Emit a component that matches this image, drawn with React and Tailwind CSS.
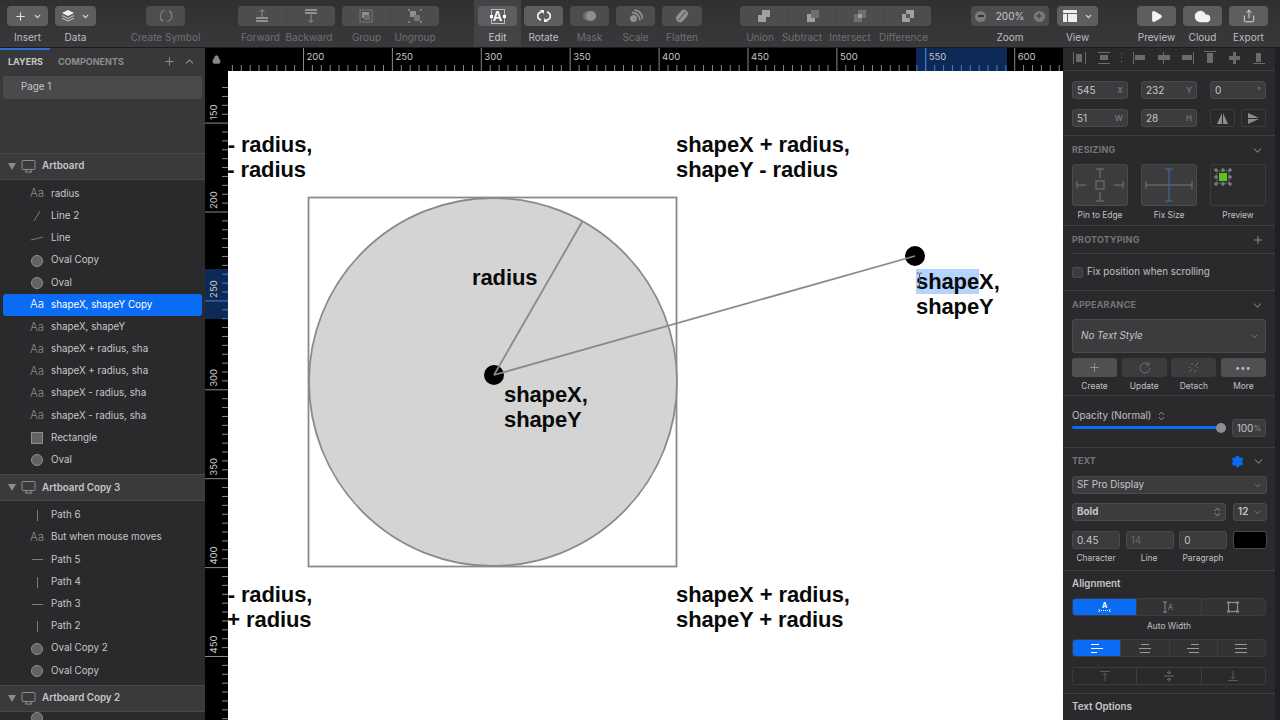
import { ChevronDown, ChevronUp, Plus, Lock, Play, Cloud, Share, Settings } from "lucide-react";

const FONT = "font-['Inter','Liberation_Sans',sans-serif]";

function Btn({ w, dim, children, className = "" }) {
  return (
    <div className={`flex h-5 items-center justify-center rounded-[4px] ${dim ? "bg-[#4d4d50]" : "bg-[#5e5e61]"} ${w} ${className}`}>
      {children}
    </div>
  );
}

function Tool({ label, dim, w, ml, children }) {
  return (
    <div className={`flex shrink-0 flex-col items-center ${w} ${ml}`}>
      <Btn w="w-full" dim={dim}>{children}</Btn>
      <span className={`mt-[5px] whitespace-nowrap text-[10px] leading-[12px] ${dim ? "text-[#6f6f72]" : "text-[#bdbdbf]"}`}>{label}</span>
    </div>
  );
}

function SegTools({ items, ml, w }) {
  return (
    <div className={`flex shrink-0 flex-col ${w} ${ml}`}>
      <div className="flex h-5 divide-x divide-[#454548] rounded-[4px] bg-[#4d4d50]">
        {items.map((it) => (
          <div key={it.label} className={`flex items-center justify-center ${it.w}`}>{it.icon}</div>
        ))}
      </div>
      <div className="mt-[5px] flex">
        {items.map((it) => (
          <div key={it.label} className={`flex justify-center whitespace-nowrap text-[10px] leading-[12px] text-[#6f6f72] ${it.lw || it.w}`}>{it.label}</div>
        ))}
      </div>
    </div>
  );
}

const Ico = ({ children, w = 18, h = 16 }) => (
  <svg width={w} height={h} viewBox={`0 0 ${w} ${h}`}>{children}</svg>
);

function Toolbar() {
  const g = "#8f8f92";
  return (
    <div className="relative flex h-[47px] shrink-0 bg-gradient-to-b from-[#303033] to-[#39393c] pl-[7px] pt-[6px]">
      <Tool label="Insert" w="w-[41px]">
        <Plus size={13} color="#e0e0e0" strokeWidth={2} className="mr-[3px]" />
        <ChevronDown size={9} color="#e0e0e0" strokeWidth={3} className="ml-[3px]" />
      </Tool>
      <Tool label="Data" w="w-[41px]" ml="ml-[7px]">
        <Ico w={14} h={12}>
          <path d="M7 0l6 3-6 3-6-3z" fill="#eee" />
          <path d="M1 5.500l6 3 6-3M1 8l6 3 6-3" fill="none" stroke="#ccc" strokeWidth="1" />
        </Ico>
        <ChevronDown size={9} color="#e0e0e0" strokeWidth={3} className="ml-[6px]" />
      </Tool>
      <Tool label="Create Symbol" dim w="w-[39px]" ml="ml-[50px]">
        <Ico w={14} h={14}>
          <path d="M5.500 1.500A5.500 5.500 0 0 0 3 11M8.500 12.500A5.500 5.500 0 0 0 11 3" fill="none" stroke={g} strokeWidth="1" />
          <path d="M1 11l2-.5.5 2.500M13 3l-2 .5-.5-2.500" fill="none" stroke={g} strokeWidth="1" />
        </Ico>
      </Tool>
      <SegTools
        w="w-[97px]"
        ml="ml-[53px]"
        items={[
          { label: "Forward", w: "w-[49px]", lw: "w-[45px]", icon: <Ico><path d="M3 9h12v2H3zM3 12h12v2H3z" fill={g} /><path d="M9 9V2M6.500 4L9 1.500 11.500 4" fill="none" stroke={g} /></Ico> },
          { label: "Backward", w: "w-[48px]", lw: "w-[52px]", icon: <Ico><path d="M3 1h12v2H3zM3 4h12v2H3z" fill={g} /><path d="M9 6v8M6.500 12L9 14.500 11.500 12" fill="none" stroke={g} /></Ico> },
        ]}
      />
      <SegTools
        w="w-[97px]"
        ml="ml-[7px]"
        items={[
          { label: "Group", w: "w-[49px]", icon: <Ico w={16} h={16}><rect x="2" y="2" width="12" height="12" fill="none" stroke="#777" /><rect x="4" y="4" width="7" height="6" fill={g} /><rect x="6" y="7" width="6" height="5" fill="#6b6b6e" /></Ico> },
          { label: "Ungroup", w: "w-[48px]", icon: <Ico w={16} h={16}><rect x="3" y="3" width="6" height="6" fill={g} /><rect x="7" y="7" width="6" height="6" fill="#777" /><circle cx="2" cy="2" r="1" fill={g} /><circle cx="14" cy="2" r="1" fill={g} /><circle cx="2" cy="14" r="1" fill={g} /><circle cx="14" cy="14" r="1" fill={g} /></Ico> },
        ]}
      />
      <div className="ml-[35px] flex w-[47px] shrink-0 flex-col items-center bg-[#444447] px-[4px] pt-[6px] -mt-[6px]">
        <Btn w="w-[39px]">
          <span className="relative flex h-[15px] w-[14px] items-center justify-center border border-[#bbb] text-[13px] font-semibold leading-none text-white">
            A
            <span className="absolute -left-[2px] top-[5px] h-[3px] w-[3px] bg-white" />
            <span className="absolute -right-[2px] top-[5px] h-[3px] w-[3px] bg-white" />
          </span>
        </Btn>
        <span className="mt-[5px] text-[10px] leading-[12px] text-[#c8c8ca]">Edit</span>
      </div>
      <Tool label="Rotate" w="w-[39px]" ml="ml-[3px]">
        <Ico w={14} h={14}>
          <path d="M5.500 3A4 4 0 0 0 4 11M8.500 11A4 4 0 0 0 10 3" fill="none" stroke="#eee" strokeWidth="1.800" />
          <path d="M3 1h4v4zM11 13H7V9z" fill="#eee" />
        </Ico>
      </Tool>
      <Tool label="Mask" dim w="w-[39px]" ml="ml-[7px]">
        <Ico w={16} h={14}><circle cx="6" cy="7" r="5" fill="#6b6b6e" /><circle cx="9" cy="7" r="5" fill={g} /></Ico>
      </Tool>
      <Tool label="Scale" dim w="w-[39px]" ml="ml-[7px]">
        <Ico w={14} h={14}><circle cx="4.500" cy="9.500" r="3.500" fill={g} /><path d="M3 3.500a8 8 0 0 1 8 8M5.500 1a9 9 0 0 1 8 9" fill="none" stroke={g} strokeWidth="1.800" /></Ico>
      </Tool>
      <Tool label="Flatten" dim w="w-[40px]" ml="ml-[7px]">
        <Ico w={14} h={14}><rect x="3" y="0" width="8" height="14" rx="4" transform="rotate(40 7 7)" fill={g} /><path d="M3.500 11L10.500 3" stroke="#4d4d50" strokeWidth="1" /></Ico>
      </Tool>
      <SegTools
        w="w-[191px]"
        ml="ml-[38px]"
        items={[
          { label: "Union", w: "w-[49px]", lw: "w-[40px]", icon: <Ico w={14} h={14}><path d="M5 1h8v7H9v5H1V6h4z" fill="#a0a0a3" /></Ico> },
          { label: "Subtract", w: "w-[48px]", lw: "w-[44px]", icon: <Ico w={14} h={14}><rect x="5" y="1" width="8" height="8" fill="#6f6f72" /><path d="M1 5h4v4h4v4H1z" fill="#a0a0a3" /></Ico> },
          { label: "Intersect", w: "w-[47px]", lw: "w-[52px]", icon: <Ico w={14} h={14}><rect x="5" y="1" width="8" height="8" fill="#6f6f72" /><rect x="1" y="5" width="8" height="8" fill="#6f6f72" /><rect x="5" y="5" width="4" height="4" fill="#a0a0a3" /></Ico> },
          { label: "Difference", w: "w-[47px]", lw: "w-[55px]", icon: <Ico w={14} h={14}><path d="M5 1h8v8H9V5H5zM1 5h4v4h4v4H1z" fill="#a0a0a3" /><rect x="5" y="5" width="4" height="4" fill="#5a5a5d" /></Ico> },
        ]}
      />
      <div className="ml-[40px] flex w-[78px] shrink-0 flex-col items-center">
        <div className="flex h-5 w-full items-center justify-between rounded-[4px] bg-[#4d4d50] px-[4px]">
          <span className="flex h-[11px] w-[11px] items-center justify-center rounded-full bg-[#7a7a7d] text-[#333]"><span className="h-[1.500px] w-[6px] bg-[#333]" /></span>
          <span className="text-[10px] text-[#c8c8ca]">200%</span>
          <span className="flex h-[11px] w-[11px] items-center justify-center rounded-full bg-[#7a7a7d]"><Plus size={8} color="#333" strokeWidth={3} /></span>
        </div>
        <span className="mt-[5px] text-[10px] leading-[12px] text-[#bdbdbf]">Zoom</span>
      </div>
      <Tool label="View" w="w-[41px]" ml="ml-[8px]">
        <Ico w={14} h={12}><path d="M0 1a1 1 0 0 1 1-1h12a1 1 0 0 1 1 1v2H0z" fill="#eee" /><rect x="0" y="4" width="4" height="8" fill="#eee" /><rect x="5" y="4" width="9" height="8" fill="#eee" /></Ico>
        <ChevronDown size={9} color="#e0e0e0" strokeWidth={3} className="ml-[7px]" />
      </Tool>
      <Tool label="Preview" w="w-[39px]" ml="ml-[39px]">
        <Play size={13} fill="#f2f2f2" color="#f2f2f2" />
      </Tool>
      <Tool label="Cloud" w="w-[39px]" ml="ml-[7px]">
        <Cloud size={17} fill="#f2f2f2" color="#f2f2f2" />
      </Tool>
      <Tool label="Export" w="w-[39px]" ml="ml-[7px]">
        <Share size={14} color="#e8e8e8" strokeWidth={1.500} />
      </Tool>
    </div>
  );
}

const Tri = () => (
  <svg width="8" height="7" viewBox="0 0 8 7"><path d="M0 0h8L4 7z" fill="#8c8c8f" /></svg>
);

const Monitor = () => (
  <svg width="15" height="13" viewBox="0 0 15 13" fill="none" stroke="#8c8c8f">
    <rect x="1" y="0.500" width="13" height="9" rx="1" />
    <path d="M4 12h7M5 10v2M10 10v2" />
  </svg>
);

function LayerIcon({ t }) {
  if (t === "text") return <span className="text-[11.500px] font-light text-[#8b8b8e]">Aa</span>;
  if (t === "oval") return <span className="block h-3 w-3 rounded-full border border-[#8e8e90] bg-[#636366]" />;
  if (t === "rect") return <span className="block h-3 w-3 border border-[#8e8e90] bg-[#636366]" />;
  if (t === "v") return <span className="block h-[11px] w-px bg-[#7b7b7e]" />;
  if (t === "h") return <span className="block h-px w-[11px] bg-[#7b7b7e]" />;
  if (t === "line2") return <svg width="12" height="12"><path d="M3 11L9 1" stroke="#7b7b7e" /></svg>;
  return <svg width="12" height="12"><path d="M0 8L12 5" stroke="#7b7b7e" /></svg>;
}

function Layer({ t, name, sel }) {
  return (
    <div className={`flex h-[22.200px] items-center ${sel ? "mx-[3px] rounded-[3px] bg-[#0a6cf5]" : "mx-[3px]"}`}>
      <span className="flex w-[41px] justify-end">
        <span className={`flex w-[14px] justify-center ${sel ? "[&>span]:text-white" : ""}`}><LayerIcon t={t} /></span>
      </span>
      <span className={`ml-[7px] whitespace-nowrap text-[9.800px] ${sel ? "text-white" : "text-[#c6c6c8]"}`}>{name}</span>
    </div>
  );
}

function ArtHeader({ name }) {
  return (
    <div className="flex h-[27px] shrink-0 items-center border-y border-[#48484a] bg-[#3a3a3c] pl-[8px]">
      <Tri />
      <span className="ml-[5px]"><Monitor /></span>
      <span className="ml-[6px] text-[9.800px] font-semibold text-[#c6c6c8]">{name}</span>
    </div>
  );
}

const artboard1 = [
  ["text", "radius"], ["line2", "Line 2"], ["line", "Line"], ["oval", "Oval Copy"], ["oval", "Oval"],
  ["text", "shapeX, shapeY Copy", true], ["text", "shapeX, shapeY"], ["text", "shapeX + radius, sha"],
  ["text", "shapeX + radius, sha"], ["text", "shapeX - radius, sha"], ["text", "shapeX - radius, sha"],
  ["rect", "Rectangle"], ["oval", "Oval"],
];
const artboard3 = [
  ["v", "Path 6"], ["text", "But when mouse moves"], ["h", "Path 5"], ["v", "Path 4"], ["h", "Path 3"],
  ["v", "Path 2"], ["oval", "Oval Copy 2"], ["oval", "Oval Copy"],
];

function LeftPanel() {
  return (
    <div className="relative flex w-[205px] shrink-0 flex-col overflow-hidden bg-[#2a2a2c]">
      <div className="absolute left-0 top-0 h-[2px] w-[50px] bg-[#2b6fd4]" />
      <div className="h-[105px] shrink-0 bg-[#38383a]">
        <div className="flex h-[27px] items-center pl-[8px] pr-[9px]">
          <span className="text-[9px] font-bold text-[#c6c6c8]">LAYERS</span>
          <span className="ml-[15px] text-[9px] font-bold text-[#8c8c8f]">COMPONENTS</span>
          <Plus size={13} color="#8c8c8f" className="ml-auto" />
          <ChevronUp size={13} color="#8c8c8f" className="ml-[7px]" />
        </div>
        <div className="mx-[3px] mt-[1px] flex h-[23px] items-center rounded-[3px] bg-[#4a4a4c] pl-[18px] text-[9.800px] text-[#c6c6c8]">Page 1</div>
      </div>
      <ArtHeader name="Artboard" />
      <div className="shrink-0 pb-[3px] pt-[3px]">
        {artboard1.map(([t, n, s], i) => <Layer key={i} t={t} name={n} sel={s} />)}
      </div>
      <ArtHeader name="Artboard Copy 3" />
      <div className="shrink-0 pb-[3px] pt-[3px]">
        {artboard3.map(([t, n], i) => <Layer key={i} t={t} name={n} />)}
      </div>
      <ArtHeader name="Artboard Copy 2" />
      <Layer t="oval" name="" />
    </div>
  );
}

const PX = 1.778;

function TopRuler() {
  const marks = [];
  for (let v = 150; v <= 650; v += 5) marks.push(v);
  return (
    <svg className="absolute left-0 top-0" width="858" height="23">
      <rect x="711" y="0" width="91" height="23" fill="#0c2a55" />
      {marks.map((v) => {
        const x = 75.500 + (v - 200) * PX + 23;
        if (x < 23) return null;
        const major = v % 50 === 0;
        return <line key={v} x1={x} x2={x} y1={major ? 0 : 17} y2="23" stroke={x > 711 && x < 802 ? "#3f7fd6" : "#8a8a8a"} strokeWidth="1" />;
      })}
      {[200, 250, 300, 350, 400, 450, 500, 550, 600].map((v) => (
        <text key={v} x={75.500 + (v - 200) * PX + 26} y="12" fontSize="9.500" fill="#c8c8c8" fontFamily="Inter">{v}</text>
      ))}
      <line x1="720.500" x2="720.500" y1="0" y2="23" stroke="#3f7fd6" />
    </svg>
  );
}

function LeftRuler() {
  const marks = [];
  for (let v = 130; v <= 500; v += 5) marks.push(v);
  const yOf = (v) => 141 + (v - 200) * PX;
  return (
    <svg className="absolute left-0 top-0" width="23" height="650">
      <rect x="0" y="198" width="23" height="50" fill="#0c2a55" />
      {marks.map((v) => {
        const y = yOf(v);
        const major = v % 50 === 0;
        return <line key={v} x1={major ? 0 : 17} x2="23" y1={y} y2={y} stroke={y > 198 && y < 248 ? "#3f7fd6" : "#8a8a8a"} />;
      })}
      {[150, 200, 250, 300, 350, 400, 450].map((v) => (
        <text key={v} transform={`translate(12 ${yOf(v) - 3}) rotate(-90)`} fontSize="9.500" fill="#c8c8c8" fontFamily="Inter">{v}</text>
      ))}
    </svg>
  );
}

function CanvasLabel({ className, children }) {
  return (
    <div className={`absolute whitespace-pre text-[22px] font-bold leading-[25px] tracking-[-0.100px] text-[#0a0a0a] font-['Liberation_Sans',sans-serif] ${className}`}>
      {children}
    </div>
  );
}

function Canvas() {
  return (
    <div className="relative flex-1 overflow-hidden bg-black">
      <TopRuler />
      <div className="absolute left-0 top-0 flex h-[23px] w-[23px] items-center justify-center bg-black">
        <Lock size={9} color="#8c8c8f" fill="#8c8c8f" />
      </div>
      <div className="absolute left-0 top-[23px] h-[650px] w-[23px]"><LeftRuler /></div>
      <div className="absolute bottom-0 left-[23px] right-0 top-[23px] overflow-hidden bg-white">
        <svg className="absolute left-0 top-0" width="835" height="650">
          <rect x="80.500" y="126.500" width="368" height="369" fill="#fff" stroke="#8a8a8a" strokeWidth="1.800" />
          <circle cx="265" cy="311" r="184" fill="#d4d4d4" stroke="#8a8a8a" strokeWidth="1.800" />
          <circle cx="266" cy="304" r="10" fill="#000" />
          <circle cx="687" cy="185" r="10" fill="#000" />
          <line x1="266" y1="304" x2="354" y2="151" stroke="#8a8a8a" strokeWidth="1.800" />
          <line x1="266" y1="304" x2="687" y2="185" stroke="#8a8a8a" strokeWidth="1.800" />
        </svg>
        <CanvasLabel className="left-[-84px] top-[61px]">{"shapeX - radius,\nshapeY - radius"}</CanvasLabel>
        <CanvasLabel className="left-[448px] top-[61px]">{"shapeX + radius,\nshapeY - radius"}</CanvasLabel>
        <CanvasLabel className="left-[-84px] top-[511px]">{"shapeX - radius,\nshapeY + radius"}</CanvasLabel>
        <CanvasLabel className="left-[448px] top-[511px]">{"shapeX + radius,\nshapeY + radius"}</CanvasLabel>
        <CanvasLabel className="left-[244px] top-[194px]">radius</CanvasLabel>
        <CanvasLabel className="left-[276px] top-[311px]">{"shapeX,\nshapeY"}</CanvasLabel>
        <CanvasLabel className="left-[688px] top-[198px]">
          <span className="bg-[#b3d4fe]">shape</span>{"X,\nshapeY"}
        </CanvasLabel>
        <svg className="absolute left-[688px] top-[201px]" width="7" height="16" viewBox="0 0 7 16" fill="none" stroke="#555" strokeWidth="1">
          <path d="M1 1c1.500 0 2.500.500 2.500 1.500v11C3.500 14.500 2.500 15 1 15M6 1c-1.500 0-2.500.500-2.500 1.500M6 15c-1.500 0-2.500-.500-2.500-1.500" />
        </svg>
      </div>
    </div>
  );
}

function NumField({ v, unit, w = "w-[56px]", dim }) {
  return (
    <div className={`flex h-[18px] items-center justify-between rounded-[3px] border border-[#4a4a4c] bg-[#3c3c3e] pl-[4px] pr-[4px] text-[10px] ${w}`}>
      <span className={dim ? "text-[#666]" : "text-[#c6c6c8]"}>{v}</span>
      {unit && <span className="text-[8px] font-semibold text-[#757578]">{unit}</span>}
    </div>
  );
}

const Caption = ({ w, children }) => (
  <div className={`text-center text-[8.400px] leading-[12px] text-[#c0c0c2] ${w}`}>{children}</div>
);

const SectionHead = ({ title, plus }) => (
  <div className="flex h-[14px] items-center justify-between pr-[2px]">
    <span className="text-[9px] font-bold tracking-[0.200px] text-[#757578]">{title}</span>
    {plus ? <Plus size={12} color="#8c8c8f" /> : <ChevronDown size={13} color="#757578" />}
  </div>
);

function AlignRow() {
  const c = "#6b6b6e";
  return (
    <div className="flex h-[23px] shrink-0 items-center border-b border-[#3f3f41] pb-[2px] pl-[10px]">
      <svg width="194" height="14" viewBox="0 0 194 14" fill={c}>
        <rect x="0" y="1" width="1" height="12" /><rect x="3" y="3" width="6" height="8" /><rect x="12" y="1" width="1" height="12" />
        <rect x="25" y="1" width="12" height="1" /><rect x="27" y="4" width="8" height="5" /><rect x="25" y="12" width="12" height="1" />
        <rect x="48" y="2" width="1" height="1" /><rect x="48" y="6" width="1" height="1" /><rect x="48" y="10" width="1" height="1" />
        <rect x="60" y="1" width="1" height="12" /><rect x="62" y="4" width="10" height="5" />
        <rect x="85" y="4" width="12" height="5" /><rect x="90" y="1" width="1" height="12" />
        <rect x="109" y="4" width="10" height="5" /><rect x="120" y="1" width="1" height="12" />
        <rect x="131" y="0" width="12" height="1" /><rect x="134" y="2" width="6" height="10" />
        <rect x="156" y="5" width="11" height="4" /><rect x="160" y="1" width="3" height="12" />
        <rect x="183" y="2" width="5" height="9" /><rect x="180" y="12" width="12" height="1" />
      </svg>
    </div>
  );
}

function Seg({ cells, h = "h-[18px]", faint }) {
  return (
    <div className={`flex ${h} divide-x divide-[#3f3f41] overflow-hidden rounded-[3px] border border-[#3c3c3e]`}>
      {cells.map((c, i) => (
        <div key={i} className={`flex flex-1 items-center justify-center ${!faint && i === 0 ? "bg-[#0a6cf5]" : faint ? "" : "bg-[#333335]"}`}>{c}</div>
      ))}
    </div>
  );
}

const Lines = ({ a, color = "#9a9a9d" }) => {
  const xs = { l: [0, 0, 0], c: [2, 0, 1], r: [4, 0, 2], j: [0, 0, 0] }[a];
  const ws = { l: [8, 12, 6], c: [8, 12, 10], r: [8, 12, 10], j: [12, 12, 12] }[a];
  return (
    <svg width="12" height="9" fill={color}>
      {xs.map((x, i) => <rect key={i} x={x} y={i * 4} width={ws[i]} height="1" />)}
    </svg>
  );
};

function RightPanel() {
  return (
    <div className="flex w-[217px] shrink-0 bg-[#1f2024]">
      <div className="flex w-[212px] shrink-0 flex-col overflow-hidden bg-[#2a2a2c]">
        <AlignRow />
        <div className="flex flex-col gap-[10px] border-b border-[#3f3f41] px-[9px] pb-[8px] pt-[10px]">
          <div className="flex justify-between">
            <NumField v="545" unit="X" /><NumField v="232" unit="Y" /><NumField v="0" unit="°" />
          </div>
          <div className="flex justify-between">
            <NumField v="51" unit="W" /><NumField v="28" unit="H" />
            <div className="flex w-[56px] justify-between">
              <div className="flex h-[18px] w-[25px] items-center justify-center rounded-[3px] border border-[#3c3c3e]">
                <svg width="11" height="11"><path d="M5 0v11H0zM6 0v11h5z" fill="#8c8c8f" /></svg>
              </div>
              <div className="flex h-[18px] w-[25px] items-center justify-center rounded-[3px] border border-[#3c3c3e]">
                <svg width="11" height="11"><path d="M0 0l11 5H0zM0 6h11L0 11z" fill="#8c8c8f" /></svg>
              </div>
            </div>
          </div>
        </div>
        <div className="border-b border-[#3f3f41] px-[9px] pb-[4px] pt-[7px]">
          <SectionHead title="RESIZING" />
          <div className="mt-[7px] flex justify-between">
            <div className="flex h-[42px] w-[56px] items-center justify-center rounded-[3px] border border-[#4a4a4c] bg-[#3c3c3e]">
              <svg width="48" height="34" fill="none" stroke="#77777a">
                <path d="M20 1h8M24 1v9M20 33h8M24 33v-9M1 13v8M1 17h9M47 13v8M47 17h-9" />
                <rect x="20" y="13" width="8" height="8" />
              </svg>
            </div>
            <div className="flex h-[42px] w-[56px] items-center justify-center rounded-[3px] border border-[#4a4a4c] bg-[#3c3c3e]">
              <svg width="48" height="34" fill="none">
                <path d="M1 13v8M47 13v8M1 17h46" stroke="#77777a" />
                <path d="M20 1h8M24 1v32M20 33h8" stroke="#3c6fb0" />
              </svg>
            </div>
            <div className="h-[42px] w-[56px] rounded-[3px] border border-[#3c3c3e] bg-[#2c2c2e] pl-[3px] pt-[3px]">
              <svg width="18" height="18" fill="#2a2a2c" stroke="#bbb" strokeWidth="0.800">
                <rect x="3" y="3" width="12" height="12" stroke="#666" fill="none" />
                <rect x="5" y="5" width="8" height="8" fill="#5cc21f" stroke="none" />
                {[[2,2],[9,2],[16,2],[2,9],[16,9],[2,16],[9,16],[16,16]].map(([x,y]) => <circle key={`${x}${y}`} cx={x} cy={y} r="1.200" />)}
              </svg>
            </div>
          </div>
          <div className="mt-[3px] flex justify-between">
            <Caption w="w-[56px]">Pin to Edge</Caption>
            <Caption w="w-[56px]">Fix Size</Caption>
            <Caption w="w-[56px]">Preview</Caption>
          </div>
        </div>
        <div className="border-b border-[#3f3f41] pl-[9px]">
          <div className="border-b border-[#3f3f41] pb-[6px] pr-[9px] pt-[7px]"><SectionHead title="PROTOTYPING" plus /></div>
          <div className="flex h-[36px] items-center">
            <span className="h-[11px] w-[11px] rounded-[2px] border border-[#4a4a4c] bg-[#3c3c3e]" />
            <span className="ml-[4px] text-[9.800px] text-[#c0c0c2]">Fix position when scrolling</span>
          </div>
        </div>
        <div className="border-b border-[#3f3f41] px-[9px] pb-[3px] pt-[7px]">
          <SectionHead title="APPEARANCE" />
          <div className="mt-[7px] flex h-[34px] items-center justify-between rounded-[3px] border border-[#4a4a4c] bg-[#3c3c3e] pl-[8px] pr-[6px]">
            <span className="text-[9.800px] italic text-[#c6c6c8]">No Text Style</span>
            <ChevronDown size={9} color="#8c8c8f" />
          </div>
          <div className="mt-[5px] flex justify-between">
            {[
              ["Create", false, <Plus key="a" size={13} color="#a0a0a3" strokeWidth={1.500} />],
              ["Update", true, <svg key="b" width="13" height="13" fill="none" stroke="#6f6f72"><path d="M11 4a5 5 0 1 0 1 3M11 1v3H8" /></svg>],
              ["Detach", true, <svg key="c" width="13" height="13" fill="none" stroke="#6f6f72"><path d="M2 11l3-3M8 5l3-3M3 6l-1 1M10 7l1-1M5 2v2M8 9v2" /></svg>],
              ["More", false, <span key="d" className="text-[9px] font-bold leading-none tracking-[1px] text-[#bdbdbf]">•••</span>],
            ].map(([label, dim, ic]) => (
              <div key={label} className="flex w-[45px] flex-col items-center">
                <div className={`flex h-[19px] w-full items-center justify-center rounded-[3px] ${dim ? "bg-[#3c3c3e]" : "bg-[#505053]"}`}>{ic}</div>
                <div className="mt-[3px] text-[8.400px] leading-[12px] text-[#c0c0c2]">{label}</div>
              </div>
            ))}
          </div>
        </div>
        <div className="border-b border-[#3f3f41] px-[9px] pb-[10px] pt-[13px]">
          <div className="flex items-start justify-between">
            <div className="w-[154px]">
              <div className="flex h-[14px] items-center text-[9.800px] text-[#c0c0c2]">
                Opacity (Normal)
                <svg className="ml-[7px]" width="7" height="10" fill="none" stroke="#8c8c8f"><path d="M1 4l2.500-3L6 4M1 6l2.500 3L6 6" /></svg>
              </div>
              <div className="relative mt-[3px] h-[3px] rounded-full bg-[#0a6cf5]">
                <span className="absolute -top-[3.500px] right-0 h-[10px] w-[10px] rounded-full bg-[#8e8e92]" />
              </div>
            </div>
            <div className="mt-[10px] flex h-[18px] w-[34px] items-center justify-center rounded-[3px] border border-[#4a4a4c] bg-[#3c3c3e] text-[10px] text-[#c6c6c8]">
              100<span className="text-[8px] text-[#8c8c8f]">%</span>
            </div>
          </div>
        </div>
        <div className="border-b border-[#3f3f41] pl-[9px]">
          <div className="pr-[8px] pt-[6px]">
            <div className="flex h-[14px] items-center">
              <span className="text-[9px] font-bold text-[#757578]">TEXT</span>
              <Settings size={13} color="#0a6cf5" fill="#0a6cf5" className="ml-auto" />
              <ChevronDown size={13} color="#757578" className="ml-[8px] mr-[2px]" />
            </div>
            <div className="mt-[8px] flex h-[18px] items-center justify-between rounded-[3px] border border-[#4a4a4c] bg-[#3c3c3e] px-[4px] text-[9.800px] text-[#c6c6c8]">
              SF Pro Display
              <ChevronDown size={9} color="#8c8c8f" />
            </div>
            <div className="mt-[9px] flex justify-between">
              <div className="flex h-[18px] w-[154px] items-center justify-between rounded-[3px] border border-[#4a4a4c] bg-[#3c3c3e] px-[4px] text-[9.800px] font-bold text-[#c6c6c8]">
                Bold
                <svg width="7" height="10" fill="none" stroke="#8c8c8f"><path d="M1 4l2.500-3L6 4M1 6l2.500 3L6 6" /></svg>
              </div>
              <div className="flex h-[18px] w-[34px] items-center justify-between rounded-[3px] border border-[#4a4a4c] bg-[#3c3c3e] px-[4px] text-[9.800px] font-semibold text-[#c6c6c8]">
                12
                <ChevronDown size={9} color="#8c8c8f" />
              </div>
            </div>
            <div className="mt-[10px] flex justify-between">
              <NumField v="0.45" w="w-[48px]" />
              <NumField v="14" w="w-[48px]" dim />
              <NumField v="0" w="w-[48px]" />
              <div className="h-[18px] w-[34px] rounded-[3px] border border-[#4a4a4c] bg-black" />
            </div>
            <div className="mt-[3px] flex gap-[5px] pb-[6px]">
              <Caption w="w-[48px]">Character</Caption>
              <Caption w="w-[48px]">Line</Caption>
              <Caption w="w-[48px] ml-[1px]">Paragraph</Caption>
            </div>
          </div>
        </div>
        <div className="border-b border-[#3f3f41] px-[9px] pb-[8px] pt-[6px]">
          <div className="text-[9.800px] font-semibold leading-[14px] text-[#c6c6c8]">Alignment</div>
          <div className="mt-[7px]">
            <Seg cells={[
              <svg key="a" width="13" height="11" fill="none" stroke="#fff"><path d="M1 7v3M12 7v3M1 8.500h11" strokeDasharray="1 1" /><text x="4" y="6" fontSize="7" fill="#fff" stroke="none" fontFamily="Inter" fontWeight="700">A</text></svg>,
              <svg key="b" width="13" height="12" fill="none" stroke="#8c8c8f"><path d="M1 1h4M3 1v10M1 11h4" /><text x="6" y="9" fontSize="7" fill="#8c8c8f" stroke="none" fontFamily="Inter">A</text></svg>,
              <svg key="c" width="12" height="12" fill="none" stroke="#8c8c8f"><rect x="1.500" y="1.500" width="9" height="9" strokeWidth="1.200" /><path d="M0 1.500h3M9 1.500h3M0 10.500h3M9 10.500h3" strokeWidth="2" /></svg>,
            ]} />
          </div>
          <div className="mt-[4px] text-center text-[8.400px] leading-[12px] text-[#c0c0c2]">Auto Width</div>
          <div className="mt-[7px]">
            <Seg cells={[<Lines key="l" a="l" color="#fff" />, <Lines key="c" a="c" />, <Lines key="r" a="r" />, <Lines key="j" a="j" />]} />
          </div>
          <div className="mt-[10px]">
            <Seg faint cells={[
              <svg key="t" width="10" height="10" fill="none" stroke="#5a5a5d"><path d="M0 .5h10M5 2v8M3 4l2-2 2 2" /></svg>,
              <svg key="m" width="10" height="12" fill="none" stroke="#6b6b6e"><path d="M0 6h10M5 0v4M5 8v4M3 2l2 2 2-2M3 10l2-2 2 2" /></svg>,
              <svg key="b" width="10" height="10" fill="none" stroke="#5a5a5d"><path d="M0 9.500h10M5 0v8M3 6l2 2 2-2" /></svg>,
            ]} />
          </div>
        </div>
        <div className="px-[9px] pt-[6px] text-[9.800px] font-semibold leading-[14px] text-[#c6c6c8]">Text Options</div>
      </div>
    </div>
  );
}

export default function App() {
  return (
    <div className={`flex h-[720px] w-[1280px] flex-col overflow-hidden bg-[#2a2a2c] ${FONT} antialiased`}>
      <Toolbar />
      <div className="flex min-h-0 flex-1 border-t border-[#1c1c1e]">
        <LeftPanel />
        <Canvas />
        <RightPanel />
      </div>
    </div>
  );
}
